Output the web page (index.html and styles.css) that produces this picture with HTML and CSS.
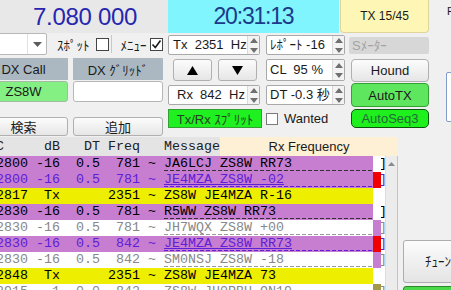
FILE: index.html
```html
<!doctype html>
<html>
<head>
<meta charset="utf-8" />
<title>WSJT-X</title>
<link rel="stylesheet" href="styles.css">
</head>
<body>
	<div class="top">
		<div class="freq">7.080 000</div>
		<div class="clock">20:31:13</div>
		<div class="txper">TX 15/45</div>
		<div class="edge">F</div>
	</div>

	<div class="main">
		<div class="left">
			<div class="rowa">
				<div class="combo"><span class="drop"><svg width="9" height="5" viewBox="0 0 9 5"><path d="M0 0h9L4.5 5z" fill="#5c5c5c"/></svg></span></div>
				<span class="lbl spot">ｽﾎﾟｯﾄ</span><span class="chk"></span>
				<span class="sep"></span>
				<span class="lbl menu">ﾒﾆｭｰ</span><span class="chk on"><svg width="11" height="11" viewBox="0 0 11 11"><path d="M1.5 5.5l2.8 3 5.2-7" stroke="#1a1a1a" stroke-width="1.6" fill="none"/></svg></span>
			</div>
			<div class="rowb">
				<div class="head c1">DX Call</div>
				<div class="head c2">DX ｸﾞﾘｯﾄﾞ</div>
			</div>
			<div class="rowc">
				<div class="call c1">ZS8W</div>
				<div class="grid c2"></div>
			</div>
			<div class="rowd">
				<div class="btn c1">検索</div>
				<div class="btn c2">追加</div>
			</div>
		</div>

		<div class="ctrl">
			<div class="cgrid">
				<div class="crow r1">
					<div class="spin w1 txf"><span class="val">Tx  2351  Hz</span><span class="arr"><svg width="8" height="15" viewBox="0 0 8 15"><path d="M0 5L4 0 8 5zM0 10L4 15 8 10z" fill="#707070"/></svg></span></div>
					<div class="spin w2"><span class="val">ﾚﾎﾟｰﾄ -16</span><span class="arr"><svg width="8" height="15" viewBox="0 0 8 15"><path d="M0 5L4 0 8 5zM0 10L4 15 8 10z" fill="#707070"/></svg></span></div>
					<div class="smeter">Sﾒｰﾀｰ</div>
				</div>
				<div class="crow r2">
					<div class="btn step up"><svg width="11" height="9" viewBox="0 0 11 9"><path d="M0 9L5.5 0 11 9z" fill="#000"/></svg></div>
					<div class="btn step dn"><svg width="11" height="9" viewBox="0 0 11 9"><path d="M0 0h11L5.5 9z" fill="#000"/></svg></div>
					<div class="spin w2 cl"><span class="val">CL  95 %</span><span class="arr"><svg width="8" height="15" viewBox="0 0 8 15"><path d="M0 5L4 0 8 5zM0 10L4 15 8 10z" fill="#707070"/></svg></span></div>
					<div class="btn rbtn">Hound</div>
				</div>
				<div class="crow r3">
					<div class="spin w1 rxf"><span class="val">Rx  842  Hz</span><span class="arr"><svg width="8" height="15" viewBox="0 0 8 15"><path d="M0 5L4 0 8 5zM0 10L4 15 8 10z" fill="#707070"/></svg></span></div>
					<div class="spin w2"><span class="val">DT -0.3 秒</span><span class="arr"><svg width="8" height="15" viewBox="0 0 8 15"><path d="M0 5L4 0 8 5zM0 10L4 15 8 10z" fill="#707070"/></svg></span></div>
					<div class="rbtn autotx">AutoTX</div>
				</div>
				<div class="crow r4">
					<div class="split">Tx/Rx ｽﾌﾟﾘｯﾄ</div>
					<span class="chk want"></span><span class="lbl">Wanted</span>
					<div class="rbtn autoseq">AutoSeq3</div>
				</div>
			</div>
			<div class="rside"><div class="slider"></div></div>
		</div>
	</div>

	<div class="lower">
		<div class="list">
			<div class="lhead">
				<div class="cols">UTC     dB   DT Freq   Message</div>
				<div class="title">Rx Frequency</div>
			</div>
			<div class="lbody">
				<div class="rows">
					<div class="row cq"><span class="txt"><span class="pre">202800 -16  0.5  781 ~ </span><span class="msg">JA6LCJ ZS8W RR73</span></span><span class="mk"></span><span class="br">]</span></div>
					<div class="row me"><span class="txt"><span class="pre">202800 -16  0.5  781 ~ </span><span class="msg">JE4MZA ZS8W -02</span></span><span class="mk red"></span><span class="br">]</span></div>
					<div class="row tx"><span class="txt"><span class="pre">202817  Tx      2351 ~ </span><span class="msg">ZS8W JE4MZA R-16</span></span><span class="mk"></span><span class="br"></span></div>
					<div class="row cq"><span class="txt"><span class="pre">202830 -16  0.5  781 ~ </span><span class="msg">R5WW ZS8W RR73</span></span><span class="mk"></span><span class="br">]</span></div>
					<div class="row old"><span class="txt"><span class="pre">202830 -16  0.5  781 ~ </span><span class="msg">JH7WQX ZS8W +00</span></span><span class="mk pur"></span><span class="br">]</span></div>
					<div class="row me"><span class="txt"><span class="pre">202830 -16  0.5  842 ~ </span><span class="msg">JE4MZA ZS8W RR73</span></span><span class="mk red"></span><span class="br">]</span></div>
					<div class="row old"><span class="txt"><span class="pre">202830 -16  0.5  842 ~ </span><span class="msg">SM0NSJ ZS8W -18</span></span><span class="mk pur"></span><span class="br">]</span></div>
					<div class="row tx"><span class="txt"><span class="pre">202848  Tx      2351 ~ </span><span class="msg">ZS8W JE4MZA 73</span></span><span class="mk"></span><span class="br"></span></div>
					<div class="row old"><span class="txt"><span class="pre">202915  -1  0.0  842 ~ </span><span class="msg">ZS8W JH0PBU QN19</span></span><span class="mk olv"></span><span class="br">]</span></div>
				</div>
				<div class="vscroll"><span class="sup"><svg width="7" height="4" viewBox="0 0 7 4"><path d="M0 4L3.5 0 7 4z" fill="#8a8a8a"/></svg></span></div>
			</div>
		</div>
		<div class="side">
			<div class="tune">ﾁｭｰﾝ</div>
			<div class="halt"></div>
		</div>
	</div>
</body>
</html>
```

FILE: styles.css
```css
body{margin:0; width:451px; height:290px; overflow:hidden; background:#f0f0f0; color:#1a1a1a; font:13px "Liberation Sans Narrow","Liberation Sans","Noto Sans CJK JP",sans-serif;}
svg{display:block;}

/* top strip */
.top{display:flex; height:33px;}
.freq{width:168px; box-sizing:border-box; padding-left:33px; background:#e8e8e8; color:#2626b0; font:24px/33px "Liberation Sans",sans-serif; letter-spacing:-0.3px;}
.clock{width:171px; background:#80f5fd; color:#1c3a8a; text-align:center; font:23px/33px "Liberation Sans",sans-serif; letter-spacing:-1.2px;}
.txper{width:89px; margin-left:1px; box-sizing:border-box; background:#fdf6b4; border:1px solid #ddd59c; border-top:0; border-radius:0 0 4px 4px; text-align:center; font:12px/32px "Liberation Sans",sans-serif;}
.edge{flex:1; padding-left:18px; font-size:11px; line-height:22px; overflow:hidden;}

/* controls */
.main{display:flex; height:104px;}
.left{width:165px; flex:none;}
.rowa{display:flex; align-items:center; height:22px;}
.combo{width:68px; height:22px; margin-left:-21px; box-sizing:border-box; background:#fff; border:1px solid #b8b8b8; border-radius:2px; display:flex; justify-content:flex-end;}
.drop{width:18px; border-left:1px solid #e2e2e2; display:flex; align-items:center; justify-content:center;}
.lbl{white-space:nowrap;}
.spot{margin-left:10px;}
.chk{width:13px; height:13px; box-sizing:border-box; background:#fff; border:1px solid #444; margin-left:6px; display:flex; align-items:center; justify-content:center; flex:none;}
.sep{width:1px; height:18px; background:#c8c8c8; margin-left:2px;}
.menu{margin-left:9px;}
.rowa .chk.on{margin-left:3px;}
.rowb{display:flex; height:22px; margin-top:3px;}
.rowc{display:flex; height:21px; margin-top:1px;}
.rowd{display:flex; height:19px; margin-top:15px;}
.c1{width:89px; margin-left:-21px;}
.c2{width:90px; margin-left:5px;}
.head{background:#abb8c1; display:flex; align-items:center; justify-content:center;}
.call{box-sizing:border-box; background:#84f084; border:1px solid #a2bca2; border-radius:3px; display:flex; align-items:center; justify-content:center;}
.grid{box-sizing:border-box; background:#fff; border:1px solid #b6b6b6; border-radius:3px;}
.btn{box-sizing:border-box; background:linear-gradient(#fcfcfc,#e6e6e6); border:1px solid #b0b0b0; border-radius:3px; display:flex; align-items:center; justify-content:center;}

.ctrl{display:flex; margin-left:3px;}
.cgrid{width:261px; padding-top:2px;}
.crow{display:flex; align-items:center;}
.r1{height:20px;}
.r2{height:22px; margin-top:4px;}
.r3{height:24px; margin-top:2px;}
.r4{height:19px; margin-top:2px;}
.spin{height:20px; box-sizing:border-box; display:flex; background:#fff; border:1px solid #a9a9a9; border-radius:2px; flex:none;}
.w1{width:92px;}
.w2{width:79px; margin-left:6px;}
.val{flex:1; white-space:pre; line-height:18px; padding-left:3px;}
.txf .val{padding-left:4px;}
.rxf .val{padding-left:8px;}
.arr{width:11px; background:#f3f3f3; border-left:1px solid #dadada; display:flex; align-items:center; justify-content:center;}
.smeter{width:80px; height:17px; margin-left:4px; background:#d7d7d7; color:#a4a4a4; line-height:17px; padding-left:3px; box-sizing:border-box; border-radius:2px;}
.step{width:39px; height:22px;}
.step.up{margin-left:5px;}
.step.dn{margin-left:6px;}
.r2 .cl{height:22px; margin-left:9px;}
.r2 .cl .val{line-height:20px;}
.rbtn{width:78px; margin-left:auto; box-sizing:border-box; display:flex; align-items:center; justify-content:center; border-radius:4px;}
.r2 .rbtn{height:23px;}
.autotx{height:24px; background:#5fe65f; border:1px solid #35a035;}
.autoseq{height:19px; background:#1ef01e; border:1px solid #0c560c; border-radius:5px; color:#24683a;}
.split{width:94px; height:19px; box-sizing:border-box; background:#1ff01f; border:1px solid #34a034; display:flex; align-items:center; justify-content:center; color:#233f23; white-space:nowrap;}
.chk.want{width:12px; height:12px; margin-left:4px; border-color:#7a7a7a;}
.want + .lbl{margin-left:6px;}
.rside{margin-left:17px; padding-top:39px;}
.slider{width:10px; height:48px; background:#fff; border:1px solid #7f9ccb; border-radius:2px;}

/* rx frequency list */
.lower{display:flex; height:153px;}
.list{width:398px; flex:none; display:flex; flex-direction:column; background:#fff;}
.lhead{display:flex; height:19px; flex:none;}
.cols{width:220px; background:#e4e4e4; overflow:hidden; white-space:pre; text-indent:-20px; font:13.33px/19px "Liberation Mono",monospace; color:#202020;}
.title{flex:1; background:#fdf0d5; text-align:center; line-height:19px;}
.lbody{display:flex; flex:1; overflow:hidden;}
.rows{width:385px; flex:none;}
.row{display:flex; height:16px; font:13.33px/16px "Liberation Mono",monospace; color:#000;}
.txt{width:373px; flex:none; display:flex; overflow:hidden; white-space:pre;}
.pre{margin-left:-20px;}
.msg{flex:1; background:linear-gradient(90deg,#333 4px,transparent 4px) 0 14px/6px 1px repeat-x;}
.mk{width:8px;}
.br{width:4px; overflow:hidden; text-indent:-2px;}
.cq .txt, .me .txt{background:#c77ed0;}
.me{color:#5c20d6;}
.me .msg{text-decoration:underline; background-image:linear-gradient(90deg,#5c20d6 4px,transparent 4px);}
.tx .txt{background:#eeee00;}
.tx .msg{background:none;}
.old{color:#888;}
.old .msg{background-image:linear-gradient(90deg,#9a9a9a 4px,transparent 4px);}
.red{background:#f00000;}
.pur{background:#c77ed0;}
.olv{background:#a19a4a;}
.vscroll{flex:1; background:#ececec; border-left:1px solid #dcdcdc; border-right:1px solid #c4c4c4;}
.sup{display:flex; height:15px; align-items:center; justify-content:center;}

.side{flex:1; overflow:hidden; padding-left:5px;}
.tune{width:80px; height:43px; margin-top:103px; box-sizing:border-box; padding-left:21px; line-height:41px; background:linear-gradient(#fcfcfc,#e4e4e4); border:1px solid #adadad; border-radius:3px; white-space:nowrap;}
.halt{width:80px; height:20px; margin-top:3px; background:#4ad84a; border:1px solid #2a8a2a; border-radius:3px;}
```
